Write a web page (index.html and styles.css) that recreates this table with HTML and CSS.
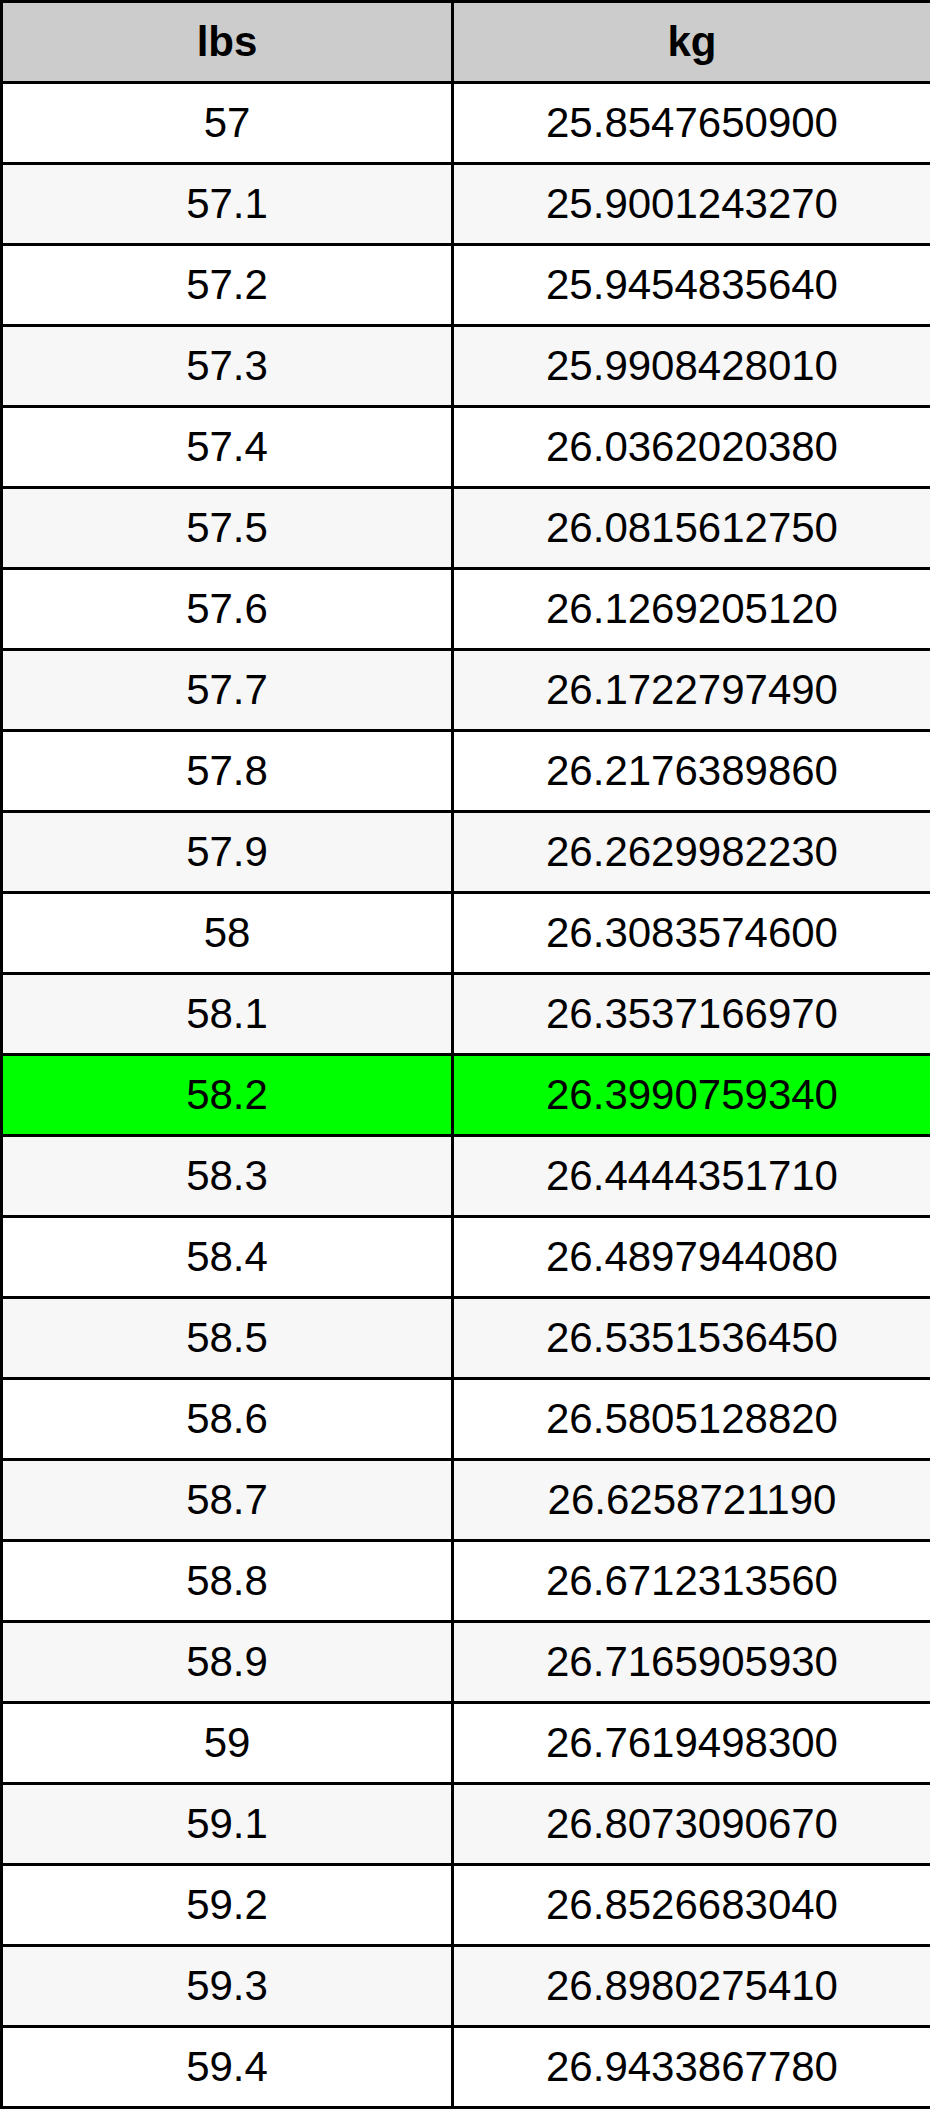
FILE: index.html
```html
<!DOCTYPE html>
<html>
<head>
<meta charset="utf-8">
<link rel="stylesheet" href="styles.css">
</head>
<body>
<table class="conv">
<colgroup><col class="c1"><col class="c2"></colgroup>
<thead>
<tr><th>lbs</th><th>kg</th></tr>
</thead>
<tbody>
<tr><td>57</td><td>25.8547650900</td></tr>
<tr class="alt"><td>57.1</td><td>25.9001243270</td></tr>
<tr><td>57.2</td><td>25.9454835640</td></tr>
<tr class="alt"><td>57.3</td><td>25.9908428010</td></tr>
<tr><td>57.4</td><td>26.0362020380</td></tr>
<tr class="alt"><td>57.5</td><td>26.0815612750</td></tr>
<tr><td>57.6</td><td>26.1269205120</td></tr>
<tr class="alt"><td>57.7</td><td>26.1722797490</td></tr>
<tr><td>57.8</td><td>26.2176389860</td></tr>
<tr class="alt"><td>57.9</td><td>26.2629982230</td></tr>
<tr><td>58</td><td>26.3083574600</td></tr>
<tr class="alt"><td>58.1</td><td>26.3537166970</td></tr>
<tr class="hl"><td>58.2</td><td>26.3990759340</td></tr>
<tr class="alt"><td>58.3</td><td>26.4444351710</td></tr>
<tr><td>58.4</td><td>26.4897944080</td></tr>
<tr class="alt"><td>58.5</td><td>26.5351536450</td></tr>
<tr><td>58.6</td><td>26.5805128820</td></tr>
<tr class="alt"><td>58.7</td><td>26.6258721190</td></tr>
<tr><td>58.8</td><td>26.6712313560</td></tr>
<tr class="alt"><td>58.9</td><td>26.7165905930</td></tr>
<tr><td>59</td><td>26.7619498300</td></tr>
<tr class="alt"><td>59.1</td><td>26.8073090670</td></tr>
<tr><td>59.2</td><td>26.8526683040</td></tr>
<tr class="alt"><td>59.3</td><td>26.8980275410</td></tr>
<tr><td>59.4</td><td>26.9433867780</td></tr>
</tbody>
</table>
</body>
</html>
```
FILE: styles.css
```css
html, body {
  margin: 0;
  padding: 0;
  background: #fff;
}
.conv {
  width: 930px;
  table-layout: fixed;
  border-collapse: collapse;
  border: 3px solid #000;
  font-family: "Liberation Sans", Arial, sans-serif;
  font-size: 42px;
  color: #000;
}
.c1 { width: 451px; }
.c2 { width: 479px; }
.conv th, .conv td {
  border: 3px solid #000;
  height: 78px;
  padding: 0;
  text-align: center;
  vertical-align: middle;
  line-height: 1;
}
.conv th {
  background: #cccccc;
  font-weight: bold;
}
.conv td { background: #fff; }
.conv tr.alt td { background: #f7f7f7; }
.conv tr.hl td { background: #00ff00; }
```
